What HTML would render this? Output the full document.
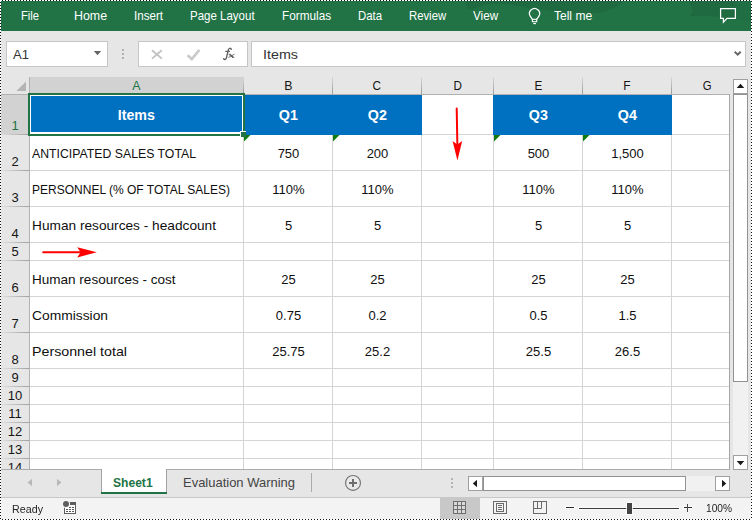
<!DOCTYPE html>
<html><head><meta charset="utf-8"><title>Excel</title>
<style>
html,body{margin:0;padding:0}
body{width:752px;height:520px;position:relative;overflow:hidden;background:#e6e6e6;font-family:"Liberation Sans",sans-serif;}
div,svg{box-sizing:content-box}
</style></head><body>
<div style="position:absolute;left:0px;top:0px;width:752px;height:31px;background:#217346;"></div>
<svg style="position:absolute;left:0;top:0" width="752" height="31" viewBox="0 0 752 31">
<path d="M465,0 L468,10 C474,9 481,6 487,4.5 C494,3.5 502,3.8 508,4.5 C516,5.5 522,6.5 526,7.2 C540,9 560,12.5 585,13.7 C600,14 615,10 626,0 Z" fill="#1f6a41"/>
<path d="M689,0 L691,7 L693,11.5 L689,16.5 C700,15 712,15.5 722,18 L735,19.7 L735,0 Z" fill="#1f6a41"/>
<path d="M735,0 V19.7 L752,21 V0 Z" fill="#206f44"/>
</svg>
<div style="position:absolute;left:20.7px;top:8px;font-size:13px;line-height:16px;color:#ffffff;white-space:nowrap;"><span style="display:inline-block;transform:scaleX(0.8638);transform-origin:0 0">File</span></div>
<div style="position:absolute;left:73.7px;top:8px;font-size:13px;line-height:16px;color:#ffffff;white-space:nowrap;"><span style="display:inline-block;transform:scaleX(0.9542);transform-origin:0 0">Home</span></div>
<div style="position:absolute;left:133.7px;top:8px;font-size:13px;line-height:16px;color:#ffffff;white-space:nowrap;"><span style="display:inline-block;transform:scaleX(0.8950);transform-origin:0 0">Insert</span></div>
<div style="position:absolute;left:189.7px;top:8px;font-size:13px;line-height:16px;color:#ffffff;white-space:nowrap;"><span style="display:inline-block;transform:scaleX(0.8847);transform-origin:0 0">Page Layout</span></div>
<div style="position:absolute;left:281.7px;top:8px;font-size:13px;line-height:16px;color:#ffffff;white-space:nowrap;"><span style="display:inline-block;transform:scaleX(0.9061);transform-origin:0 0">Formulas</span></div>
<div style="position:absolute;left:357.7px;top:8px;font-size:13px;line-height:16px;color:#ffffff;white-space:nowrap;"><span style="display:inline-block;transform:scaleX(0.8774);transform-origin:0 0">Data</span></div>
<div style="position:absolute;left:408.7px;top:8px;font-size:13px;line-height:16px;color:#ffffff;white-space:nowrap;"><span style="display:inline-block;transform:scaleX(0.8704);transform-origin:0 0">Review</span></div>
<div style="position:absolute;left:472.7px;top:8px;font-size:13px;line-height:16px;color:#ffffff;white-space:nowrap;"><span style="display:inline-block;transform:scaleX(0.8979);transform-origin:0 0">View</span></div>
<div style="position:absolute;left:553.7px;top:8px;font-size:13px;line-height:16px;color:#ffffff;white-space:nowrap;"><span style="display:inline-block;transform:scaleX(0.9250);transform-origin:0 0">Tell me</span></div>
<svg style="position:absolute;left:0;top:0" width="752" height="31" viewBox="0 0 752 31" fill="none" stroke="#fff" stroke-width="1.2">
<path d="M532.4,19.3 L530.2,16.2 A5.05,5.05 0 1 1 538.9,16.2 L536.7,19.3"/>
<rect x="532.4" y="19.3" width="4.3" height="2.4" stroke-width="1.1"/>
<path d="M533.2,23.6 H536" stroke-width="1.1"/>
<path d="M720.6,8.5 H735.4 V18.4 H727 L723.4,22.2 V18.4 H720.6 Z" stroke-width="1.25"/>
</svg>
<div style="position:absolute;left:6px;top:41px;width:100px;height:24px;background:#fff;border:1px solid #c6c6c6;"></div>
<div style="position:absolute;left:138px;top:41px;width:108px;height:24px;background:#fff;border:1px solid #c6c6c6;"></div>
<div style="position:absolute;left:251px;top:41px;width:493px;height:24px;background:#fff;border:1px solid #c6c6c6;"></div>
<div style="position:absolute;left:13px;top:47px;font-size:13px;line-height:16px;color:#333;white-space:nowrap;"><span style="display:inline-block;transform:scaleX(1.0059);transform-origin:0 0">A1</span></div>
<div style="position:absolute;left:263.2px;top:47px;font-size:13px;line-height:16px;color:#333;white-space:nowrap;"><span style="display:inline-block;transform:scaleX(1.1007);transform-origin:0 0">Items</span></div>
<svg style="position:absolute;left:93px;top:50px" width="9" height="6"><path d="M0.8,1 H8.2 L4.5,5.2 Z" fill="#646464"/></svg>
<div style="position:absolute;left:122px;top:49px;width:2px;height:2px;background:#b0b0b0;"></div>
<div style="position:absolute;left:122px;top:53px;width:2px;height:2px;background:#b0b0b0;"></div>
<div style="position:absolute;left:122px;top:57px;width:2px;height:2px;background:#b0b0b0;"></div>
<svg style="position:absolute;left:0;top:31px" width="752" height="46" viewBox="0 31 752 46" fill="none">
<path d="M152,50.2 L161.8,58.6 M161.8,50.2 L152,58.6" stroke="#c2c2c2" stroke-width="1.9"/>
<path d="M187.6,55.2 L191.8,59 L199.4,49.8" stroke="#cacaca" stroke-width="2.6"/>
<path d="M231.3,49.3 C230.9,47.9 228.7,47.8 228.3,50 L226.5,57.6 C226.1,59.6 224.6,60 223.6,58.8" stroke="#606060" stroke-width="1.35" stroke-linecap="round"/>
<path d="M225.3,51.4 H229.9" stroke="#606060" stroke-width="1.2"/>
<path d="M229.6,54.3 L233.2,57.4" stroke="#606060" stroke-width="1.7"/>
<path d="M228.4,57.5 L234.4,54.2" stroke="#606060" stroke-width="0.9"/>
<path d="M228.6,54.3 H230.6 M232.4,57.4 H234.4" stroke="#606060" stroke-width="0.8"/>
</svg>
<svg style="position:absolute;left:733px;top:49px" width="11" height="8" fill="none" stroke="#666" stroke-width="2"><path d="M1.7,2.7 L4.7,5.7 L7.7,2.7"/></svg>
<div style="position:absolute;left:30px;top:95px;width:699px;height:374px;background:#fff;"></div>
<div style="position:absolute;left:30px;top:134px;width:699px;height:1px;background:#d4d4d4;"></div>
<div style="position:absolute;left:30px;top:170px;width:699px;height:1px;background:#d4d4d4;"></div>
<div style="position:absolute;left:30px;top:206px;width:699px;height:1px;background:#d4d4d4;"></div>
<div style="position:absolute;left:30px;top:242px;width:699px;height:1px;background:#d4d4d4;"></div>
<div style="position:absolute;left:30px;top:260px;width:699px;height:1px;background:#d4d4d4;"></div>
<div style="position:absolute;left:30px;top:296px;width:699px;height:1px;background:#d4d4d4;"></div>
<div style="position:absolute;left:30px;top:332px;width:699px;height:1px;background:#d4d4d4;"></div>
<div style="position:absolute;left:30px;top:368px;width:699px;height:1px;background:#d4d4d4;"></div>
<div style="position:absolute;left:30px;top:386px;width:699px;height:1px;background:#d4d4d4;"></div>
<div style="position:absolute;left:30px;top:404px;width:699px;height:1px;background:#d4d4d4;"></div>
<div style="position:absolute;left:30px;top:422px;width:699px;height:1px;background:#d4d4d4;"></div>
<div style="position:absolute;left:30px;top:440px;width:699px;height:1px;background:#d4d4d4;"></div>
<div style="position:absolute;left:30px;top:458px;width:699px;height:1px;background:#d4d4d4;"></div>
<div style="position:absolute;left:243px;top:95px;width:1px;height:374px;background:#d4d4d4;"></div>
<div style="position:absolute;left:332px;top:95px;width:1px;height:374px;background:#d4d4d4;"></div>
<div style="position:absolute;left:421px;top:95px;width:1px;height:374px;background:#d4d4d4;"></div>
<div style="position:absolute;left:493px;top:95px;width:1px;height:374px;background:#d4d4d4;"></div>
<div style="position:absolute;left:582px;top:95px;width:1px;height:374px;background:#d4d4d4;"></div>
<div style="position:absolute;left:671px;top:95px;width:1px;height:374px;background:#d4d4d4;"></div>
<div style="position:absolute;left:30px;top:77px;width:214px;height:16px;background:#d2d2d2;"></div>
<div style="position:absolute;left:0px;top:94px;width:729px;height:1px;background:#b1b1b1;"></div>
<div style="position:absolute;left:243px;top:77px;width:1px;height:17px;background:linear-gradient(180deg,#d8d8d8,#9a9a9a);"></div>
<div style="position:absolute;left:332px;top:77px;width:1px;height:17px;background:linear-gradient(180deg,#d8d8d8,#9a9a9a);"></div>
<div style="position:absolute;left:421px;top:77px;width:1px;height:17px;background:linear-gradient(180deg,#d8d8d8,#9a9a9a);"></div>
<div style="position:absolute;left:493px;top:77px;width:1px;height:17px;background:linear-gradient(180deg,#d8d8d8,#9a9a9a);"></div>
<div style="position:absolute;left:582px;top:77px;width:1px;height:17px;background:linear-gradient(180deg,#d8d8d8,#9a9a9a);"></div>
<div style="position:absolute;left:671px;top:77px;width:1px;height:17px;background:linear-gradient(180deg,#d8d8d8,#9a9a9a);"></div>
<div style="position:absolute;left:729px;top:94px;width:1px;height:376px;background:#a6a6a6;"></div>
<div style="position:absolute;left:29px;top:77px;width:1px;height:392px;background:#b1b1b1;"></div>
<div style="position:absolute;left:1px;top:95px;width:28px;height:40px;background:#d2d2d2;"></div>
<div style="position:absolute;left:1px;top:134px;width:28px;height:1px;background:linear-gradient(90deg,#e0e0e0,#a0a0a0);"></div>
<div style="position:absolute;left:1px;top:170px;width:28px;height:1px;background:linear-gradient(90deg,#e0e0e0,#a0a0a0);"></div>
<div style="position:absolute;left:1px;top:206px;width:28px;height:1px;background:linear-gradient(90deg,#e0e0e0,#a0a0a0);"></div>
<div style="position:absolute;left:1px;top:242px;width:28px;height:1px;background:linear-gradient(90deg,#e0e0e0,#a0a0a0);"></div>
<div style="position:absolute;left:1px;top:260px;width:28px;height:1px;background:linear-gradient(90deg,#e0e0e0,#a0a0a0);"></div>
<div style="position:absolute;left:1px;top:296px;width:28px;height:1px;background:linear-gradient(90deg,#e0e0e0,#a0a0a0);"></div>
<div style="position:absolute;left:1px;top:332px;width:28px;height:1px;background:linear-gradient(90deg,#e0e0e0,#a0a0a0);"></div>
<div style="position:absolute;left:1px;top:368px;width:28px;height:1px;background:linear-gradient(90deg,#e0e0e0,#a0a0a0);"></div>
<div style="position:absolute;left:1px;top:386px;width:28px;height:1px;background:linear-gradient(90deg,#e0e0e0,#a0a0a0);"></div>
<div style="position:absolute;left:1px;top:404px;width:28px;height:1px;background:linear-gradient(90deg,#e0e0e0,#a0a0a0);"></div>
<div style="position:absolute;left:1px;top:422px;width:28px;height:1px;background:linear-gradient(90deg,#e0e0e0,#a0a0a0);"></div>
<div style="position:absolute;left:1px;top:440px;width:28px;height:1px;background:linear-gradient(90deg,#e0e0e0,#a0a0a0);"></div>
<div style="position:absolute;left:1px;top:458px;width:28px;height:1px;background:linear-gradient(90deg,#e0e0e0,#a0a0a0);"></div>
<svg style="position:absolute;left:15px;top:79px" width="12" height="13"><path d="M11,2.4 V12 H1.4 Z" fill="#b4b4b4"/></svg>
<div style="position:absolute;left:-63.5px;width:400px;text-align:center;top:78px;font-size:13px;line-height:16px;color:#217346;white-space:nowrap;"><span style="display:inline-block;transform:scaleX(0.9500);transform-origin:50% 0">A</span></div>
<div style="position:absolute;left:88.0px;width:400px;text-align:center;top:78px;font-size:13px;line-height:16px;color:#151515;white-space:nowrap;"><span style="display:inline-block;transform:scaleX(0.9500);transform-origin:50% 0">B</span></div>
<div style="position:absolute;left:177.0px;width:400px;text-align:center;top:78px;font-size:13px;line-height:16px;color:#151515;white-space:nowrap;"><span style="display:inline-block;transform:scaleX(0.9000);transform-origin:50% 0">C</span></div>
<div style="position:absolute;left:257.5px;width:400px;text-align:center;top:78px;font-size:13px;line-height:16px;color:#151515;white-space:nowrap;"><span style="display:inline-block;transform:scaleX(0.9000);transform-origin:50% 0">D</span></div>
<div style="position:absolute;left:338.0px;width:400px;text-align:center;top:78px;font-size:13px;line-height:16px;color:#151515;white-space:nowrap;"><span style="display:inline-block;transform:scaleX(0.9000);transform-origin:50% 0">E</span></div>
<div style="position:absolute;left:427.0px;width:400px;text-align:center;top:78px;font-size:13px;line-height:16px;color:#151515;white-space:nowrap;"><span style="display:inline-block;transform:scaleX(0.9200);transform-origin:50% 0">F</span></div>
<div style="position:absolute;left:507.5px;width:400px;text-align:center;top:78px;font-size:13px;line-height:16px;color:#151515;white-space:nowrap;"><span style="display:inline-block;transform:scaleX(0.8700);transform-origin:50% 0">G</span></div>
<div style="position:absolute;left:-185px;width:400px;text-align:center;top:118.4px;font-size:13px;line-height:16px;color:#217346;white-space:nowrap;"><span style="display:inline-block;transform:scaleX(1.0000);transform-origin:50% 0">1</span></div>
<div style="position:absolute;left:-185px;width:400px;text-align:center;top:154.4px;font-size:13px;line-height:16px;color:#151515;white-space:nowrap;"><span style="display:inline-block;transform:scaleX(1.0000);transform-origin:50% 0">2</span></div>
<div style="position:absolute;left:-185px;width:400px;text-align:center;top:190.4px;font-size:13px;line-height:16px;color:#151515;white-space:nowrap;"><span style="display:inline-block;transform:scaleX(1.0000);transform-origin:50% 0">3</span></div>
<div style="position:absolute;left:-185px;width:400px;text-align:center;top:226.4px;font-size:13px;line-height:16px;color:#151515;white-space:nowrap;"><span style="display:inline-block;transform:scaleX(1.0000);transform-origin:50% 0">4</span></div>
<div style="position:absolute;left:-185px;width:400px;text-align:center;top:244.4px;font-size:13px;line-height:16px;color:#151515;white-space:nowrap;"><span style="display:inline-block;transform:scaleX(1.0000);transform-origin:50% 0">5</span></div>
<div style="position:absolute;left:-185px;width:400px;text-align:center;top:280.4px;font-size:13px;line-height:16px;color:#151515;white-space:nowrap;"><span style="display:inline-block;transform:scaleX(1.0000);transform-origin:50% 0">6</span></div>
<div style="position:absolute;left:-185px;width:400px;text-align:center;top:316.4px;font-size:13px;line-height:16px;color:#151515;white-space:nowrap;"><span style="display:inline-block;transform:scaleX(1.0000);transform-origin:50% 0">7</span></div>
<div style="position:absolute;left:-185px;width:400px;text-align:center;top:352.4px;font-size:13px;line-height:16px;color:#151515;white-space:nowrap;"><span style="display:inline-block;transform:scaleX(1.0000);transform-origin:50% 0">8</span></div>
<div style="position:absolute;left:-185px;width:400px;text-align:center;top:370.4px;font-size:13px;line-height:16px;color:#151515;white-space:nowrap;"><span style="display:inline-block;transform:scaleX(1.0000);transform-origin:50% 0">9</span></div>
<div style="position:absolute;left:-185px;width:400px;text-align:center;top:388.4px;font-size:13px;line-height:16px;color:#151515;white-space:nowrap;"><span style="display:inline-block;transform:scaleX(1.0000);transform-origin:50% 0">10</span></div>
<div style="position:absolute;left:-185px;width:400px;text-align:center;top:406.4px;font-size:13px;line-height:16px;color:#151515;white-space:nowrap;"><span style="display:inline-block;transform:scaleX(1.0000);transform-origin:50% 0">11</span></div>
<div style="position:absolute;left:-185px;width:400px;text-align:center;top:424.4px;font-size:13px;line-height:16px;color:#151515;white-space:nowrap;"><span style="display:inline-block;transform:scaleX(1.0000);transform-origin:50% 0">12</span></div>
<div style="position:absolute;left:-185px;width:400px;text-align:center;top:442.4px;font-size:13px;line-height:16px;color:#151515;white-space:nowrap;"><span style="display:inline-block;transform:scaleX(1.0000);transform-origin:50% 0">13</span></div>
<div style="position:absolute;left:-185px;width:400px;text-align:center;top:460.4px;font-size:13px;line-height:16px;color:#151515;white-space:nowrap;"><span style="display:inline-block;transform:scaleX(1.0000);transform-origin:50% 0">14</span></div>
<div style="position:absolute;left:243px;top:95px;width:179px;height:40px;background:#0070c0;"></div>
<div style="position:absolute;left:493px;top:95px;width:179px;height:40px;background:#0070c0;"></div>
<div style="position:absolute;left:31px;top:96px;width:211px;height:36px;background:#0070c0;"></div>
<svg style="position:absolute;left:244px;top:135px" width="7" height="7"><path d="M0,0 H6.5 L0,6.5 Z" fill="#0f7b0f"/></svg>
<svg style="position:absolute;left:333px;top:135px" width="7" height="7"><path d="M0,0 H6.5 L0,6.5 Z" fill="#0f7b0f"/></svg>
<svg style="position:absolute;left:494px;top:135px" width="7" height="7"><path d="M0,0 H6.5 L0,6.5 Z" fill="#0f7b0f"/></svg>
<svg style="position:absolute;left:583px;top:135px" width="7" height="7"><path d="M0,0 H6.5 L0,6.5 Z" fill="#0f7b0f"/></svg>
<div style="position:absolute;left:28px;top:93px;width:217px;height:2px;background:#217346;"></div>
<div style="position:absolute;left:28px;top:134px;width:212px;height:2px;background:#217346;"></div>
<div style="position:absolute;left:28px;top:93px;width:2px;height:43px;background:#217346;"></div>
<div style="position:absolute;left:243px;top:93px;width:2px;height:38px;background:#217346;"></div>
<div style="position:absolute;left:30px;top:95px;width:213px;height:1px;background:#fff;"></div>
<div style="position:absolute;left:30px;top:95px;width:1px;height:39px;background:#fff;"></div>
<div style="position:absolute;left:242px;top:95px;width:1px;height:37px;background:#fff;"></div>
<div style="position:absolute;left:30px;top:132px;width:211px;height:2px;background:#fff;"></div>
<div style="position:absolute;left:240px;top:131px;width:6px;height:6px;background:#fff;"></div>
<div style="position:absolute;left:241px;top:132px;width:5px;height:5px;background:#217346;"></div>
<div style="position:absolute;left:-63.5px;width:400px;text-align:center;top:107.1px;font-size:14px;line-height:17px;color:#fff;white-space:nowrap;font-weight:bold;"><span style="display:inline-block;transform:scaleX(1.0170);transform-origin:50% 0">Items</span></div>
<div style="position:absolute;left:88.0px;width:400px;text-align:center;top:107.1px;font-size:14px;line-height:17px;color:#fff;white-space:nowrap;font-weight:bold;"><span style="display:inline-block;transform:scaleX(1.0221);transform-origin:50% 0">Q1</span></div>
<div style="position:absolute;left:177.0px;width:400px;text-align:center;top:107.1px;font-size:14px;line-height:17px;color:#fff;white-space:nowrap;font-weight:bold;"><span style="display:inline-block;transform:scaleX(1.0221);transform-origin:50% 0">Q2</span></div>
<div style="position:absolute;left:338.0px;width:400px;text-align:center;top:107.1px;font-size:14px;line-height:17px;color:#fff;white-space:nowrap;font-weight:bold;"><span style="display:inline-block;transform:scaleX(1.0221);transform-origin:50% 0">Q3</span></div>
<div style="position:absolute;left:427.0px;width:400px;text-align:center;top:107.1px;font-size:14px;line-height:17px;color:#fff;white-space:nowrap;font-weight:bold;"><span style="display:inline-block;transform:scaleX(1.0221);transform-origin:50% 0">Q4</span></div>
<div style="position:absolute;left:31.5px;top:146px;font-size:13px;line-height:16px;color:#0f0f0f;white-space:nowrap;"><span style="display:inline-block;transform:scaleX(0.9446);transform-origin:0 0">ANTICIPATED SALES TOTAL</span></div>
<div style="position:absolute;left:31.5px;top:182px;font-size:13px;line-height:16px;color:#0f0f0f;white-space:nowrap;"><span style="display:inline-block;transform:scaleX(0.9238);transform-origin:0 0">PERSONNEL (% OF TOTAL SALES)</span></div>
<div style="position:absolute;left:31.5px;top:218px;font-size:13px;line-height:16px;color:#0f0f0f;white-space:nowrap;"><span style="display:inline-block;transform:scaleX(1.0522);transform-origin:0 0">Human resources - headcount</span></div>
<div style="position:absolute;left:31.5px;top:272px;font-size:13px;line-height:16px;color:#0f0f0f;white-space:nowrap;"><span style="display:inline-block;transform:scaleX(1.0406);transform-origin:0 0">Human resources - cost</span></div>
<div style="position:absolute;left:31.5px;top:308px;font-size:13px;line-height:16px;color:#0f0f0f;white-space:nowrap;"><span style="display:inline-block;transform:scaleX(1.0627);transform-origin:0 0">Commission</span></div>
<div style="position:absolute;left:31.5px;top:344px;font-size:13px;line-height:16px;color:#0f0f0f;white-space:nowrap;"><span style="display:inline-block;transform:scaleX(1.0953);transform-origin:0 0">Personnel total</span></div>
<div style="position:absolute;left:88.5px;width:400px;text-align:center;top:146px;font-size:13px;line-height:16px;color:#0f0f0f;white-space:nowrap;"><span style="display:inline-block;transform:scaleX(1.0000);transform-origin:50% 0">750</span></div>
<div style="position:absolute;left:177.5px;width:400px;text-align:center;top:146px;font-size:13px;line-height:16px;color:#0f0f0f;white-space:nowrap;"><span style="display:inline-block;transform:scaleX(1.0000);transform-origin:50% 0">200</span></div>
<div style="position:absolute;left:338.5px;width:400px;text-align:center;top:146px;font-size:13px;line-height:16px;color:#0f0f0f;white-space:nowrap;"><span style="display:inline-block;transform:scaleX(1.0000);transform-origin:50% 0">500</span></div>
<div style="position:absolute;left:427.5px;width:400px;text-align:center;top:146px;font-size:13px;line-height:16px;color:#0f0f0f;white-space:nowrap;"><span style="display:inline-block;transform:scaleX(1.0000);transform-origin:50% 0">1,500</span></div>
<div style="position:absolute;left:88.5px;width:400px;text-align:center;top:182px;font-size:13px;line-height:16px;color:#0f0f0f;white-space:nowrap;"><span style="display:inline-block;transform:scaleX(1.0000);transform-origin:50% 0">110%</span></div>
<div style="position:absolute;left:177.5px;width:400px;text-align:center;top:182px;font-size:13px;line-height:16px;color:#0f0f0f;white-space:nowrap;"><span style="display:inline-block;transform:scaleX(1.0000);transform-origin:50% 0">110%</span></div>
<div style="position:absolute;left:338.5px;width:400px;text-align:center;top:182px;font-size:13px;line-height:16px;color:#0f0f0f;white-space:nowrap;"><span style="display:inline-block;transform:scaleX(1.0000);transform-origin:50% 0">110%</span></div>
<div style="position:absolute;left:427.5px;width:400px;text-align:center;top:182px;font-size:13px;line-height:16px;color:#0f0f0f;white-space:nowrap;"><span style="display:inline-block;transform:scaleX(1.0000);transform-origin:50% 0">110%</span></div>
<div style="position:absolute;left:88.5px;width:400px;text-align:center;top:218px;font-size:13px;line-height:16px;color:#0f0f0f;white-space:nowrap;"><span style="display:inline-block;transform:scaleX(1.0000);transform-origin:50% 0">5</span></div>
<div style="position:absolute;left:177.5px;width:400px;text-align:center;top:218px;font-size:13px;line-height:16px;color:#0f0f0f;white-space:nowrap;"><span style="display:inline-block;transform:scaleX(1.0000);transform-origin:50% 0">5</span></div>
<div style="position:absolute;left:338.5px;width:400px;text-align:center;top:218px;font-size:13px;line-height:16px;color:#0f0f0f;white-space:nowrap;"><span style="display:inline-block;transform:scaleX(1.0000);transform-origin:50% 0">5</span></div>
<div style="position:absolute;left:427.5px;width:400px;text-align:center;top:218px;font-size:13px;line-height:16px;color:#0f0f0f;white-space:nowrap;"><span style="display:inline-block;transform:scaleX(1.0000);transform-origin:50% 0">5</span></div>
<div style="position:absolute;left:88.5px;width:400px;text-align:center;top:272px;font-size:13px;line-height:16px;color:#0f0f0f;white-space:nowrap;"><span style="display:inline-block;transform:scaleX(1.0000);transform-origin:50% 0">25</span></div>
<div style="position:absolute;left:177.5px;width:400px;text-align:center;top:272px;font-size:13px;line-height:16px;color:#0f0f0f;white-space:nowrap;"><span style="display:inline-block;transform:scaleX(1.0000);transform-origin:50% 0">25</span></div>
<div style="position:absolute;left:338.5px;width:400px;text-align:center;top:272px;font-size:13px;line-height:16px;color:#0f0f0f;white-space:nowrap;"><span style="display:inline-block;transform:scaleX(1.0000);transform-origin:50% 0">25</span></div>
<div style="position:absolute;left:427.5px;width:400px;text-align:center;top:272px;font-size:13px;line-height:16px;color:#0f0f0f;white-space:nowrap;"><span style="display:inline-block;transform:scaleX(1.0000);transform-origin:50% 0">25</span></div>
<div style="position:absolute;left:88.5px;width:400px;text-align:center;top:308px;font-size:13px;line-height:16px;color:#0f0f0f;white-space:nowrap;"><span style="display:inline-block;transform:scaleX(1.0000);transform-origin:50% 0">0.75</span></div>
<div style="position:absolute;left:177.5px;width:400px;text-align:center;top:308px;font-size:13px;line-height:16px;color:#0f0f0f;white-space:nowrap;"><span style="display:inline-block;transform:scaleX(1.0000);transform-origin:50% 0">0.2</span></div>
<div style="position:absolute;left:338.5px;width:400px;text-align:center;top:308px;font-size:13px;line-height:16px;color:#0f0f0f;white-space:nowrap;"><span style="display:inline-block;transform:scaleX(1.0000);transform-origin:50% 0">0.5</span></div>
<div style="position:absolute;left:427.5px;width:400px;text-align:center;top:308px;font-size:13px;line-height:16px;color:#0f0f0f;white-space:nowrap;"><span style="display:inline-block;transform:scaleX(1.0000);transform-origin:50% 0">1.5</span></div>
<div style="position:absolute;left:88.5px;width:400px;text-align:center;top:344px;font-size:13px;line-height:16px;color:#0f0f0f;white-space:nowrap;"><span style="display:inline-block;transform:scaleX(1.0000);transform-origin:50% 0">25.75</span></div>
<div style="position:absolute;left:177.5px;width:400px;text-align:center;top:344px;font-size:13px;line-height:16px;color:#0f0f0f;white-space:nowrap;"><span style="display:inline-block;transform:scaleX(1.0000);transform-origin:50% 0">25.2</span></div>
<div style="position:absolute;left:338.5px;width:400px;text-align:center;top:344px;font-size:13px;line-height:16px;color:#0f0f0f;white-space:nowrap;"><span style="display:inline-block;transform:scaleX(1.0000);transform-origin:50% 0">25.5</span></div>
<div style="position:absolute;left:427.5px;width:400px;text-align:center;top:344px;font-size:13px;line-height:16px;color:#0f0f0f;white-space:nowrap;"><span style="display:inline-block;transform:scaleX(1.0000);transform-origin:50% 0">26.5</span></div>
<svg style="position:absolute;left:0;top:0" width="752" height="520" viewBox="0 0 752 520">
<path d="M43.2,252.3 H82" stroke="#ff0000" stroke-width="2" stroke-linecap="round" fill="none"/>
<path d="M96.8,252.3 L77.2,247.2 L80.6,252.3 L77.2,257.4 Z" fill="#ff0000"/>
<path d="M456.7,108.6 L457.4,146" stroke="#ff0000" stroke-width="2" stroke-linecap="round" fill="none"/>
<path d="M457.4,160.6 L452.6,141 L457.3,144.6 L462.2,141 Z" fill="#ff0000"/>
</svg>
<div style="position:absolute;left:733px;top:94px;width:15px;height:376px;background:#f1f1f1;"></div>
<div style="position:absolute;left:733px;top:79px;width:13px;height:13px;background:#fff;border:1px solid #a0a0a0;"></div>
<div style="position:absolute;left:733px;top:94px;width:13px;height:286px;background:#fff;border:1px solid #929292;"></div>
<div style="position:absolute;left:733px;top:455px;width:13px;height:13px;background:#fff;border:1px solid #a0a0a0;"></div>
<svg style="position:absolute;left:736px;top:83px" width="9" height="6"><path d="M0.7,5 L4.5,0.8 L8.3,5 Z" fill="#1a1a1a"/></svg>
<svg style="position:absolute;left:736px;top:460px" width="9" height="6"><path d="M0.7,1 L4.5,5.2 L8.3,1 Z" fill="#1a1a1a"/></svg>
<div style="position:absolute;left:0px;top:470px;width:752px;height:27px;background:#e6e6e6;"></div>
<div style="position:absolute;left:0px;top:469px;width:729px;height:1px;background:#ababab;"></div>
<div style="position:absolute;left:101px;top:469px;width:66px;height:23px;background:#fff;"></div>
<div style="position:absolute;left:101px;top:469px;width:1px;height:23px;background:#a2a2a2;"></div>
<div style="position:absolute;left:166px;top:469px;width:1px;height:23px;background:#a2a2a2;"></div>
<div style="position:absolute;left:101px;top:492px;width:66px;height:2px;background:#217346;"></div>
<div style="position:absolute;left:113px;top:474.5px;font-size:13px;line-height:16px;color:#217346;white-space:nowrap;font-weight:bold;"><span style="display:inline-block;transform:scaleX(0.9287);transform-origin:0 0">Sheet1</span></div>
<div style="position:absolute;left:183.3px;top:474.5px;font-size:13px;line-height:16px;color:#444;white-space:nowrap;"><span style="display:inline-block;transform:scaleX(0.9978);transform-origin:0 0">Evaluation Warning</span></div>
<div style="position:absolute;left:311px;top:473px;width:1px;height:19px;background:#ababab;"></div>
<svg style="position:absolute;left:344px;top:474px" width="18" height="18" fill="none" stroke="#747474" stroke-width="1.15"><circle cx="9" cy="8.9" r="7.45" fill="#e9e9e9"/><path d="M9,4.9 V12.9 M5,8.9 H13" stroke="#6e6e6e" stroke-width="2"/></svg>
<svg style="position:absolute;left:27px;top:479px" width="6" height="8"><path d="M5,-0.2 V7.3 L0.6,3.55 Z" fill="#b8b8b8"/></svg>
<svg style="position:absolute;left:56px;top:479px" width="6" height="8"><path d="M1,-0.2 V7.3 L5.4,3.55 Z" fill="#b8b8b8"/></svg>
<div style="position:absolute;left:451px;top:478px;width:2px;height:2px;background:#b4b4b4;"></div>
<div style="position:absolute;left:451px;top:482px;width:2px;height:2px;background:#b4b4b4;"></div>
<div style="position:absolute;left:451px;top:486px;width:2px;height:2px;background:#b4b4b4;"></div>
<div style="position:absolute;left:468px;top:476px;width:262px;height:15px;background:#f1f1f1;"></div>
<div style="position:absolute;left:468px;top:476px;width:13px;height:13px;background:#fff;border:1px solid #a0a0a0;"></div>
<div style="position:absolute;left:483px;top:476px;width:201px;height:13px;background:#fff;border:1px solid #929292;"></div>
<div style="position:absolute;left:715px;top:476px;width:13px;height:13px;background:#fff;border:1px solid #a0a0a0;"></div>
<svg style="position:absolute;left:472px;top:479px" width="6" height="9"><path d="M5,0.7 V8.3 L0.8,4.5 Z" fill="#1a1a1a"/></svg>
<svg style="position:absolute;left:721px;top:479px" width="6" height="9"><path d="M1,0.7 V8.3 L5.2,4.5 Z" fill="#1a1a1a"/></svg>
<div style="position:absolute;left:0px;top:497px;width:752px;height:1px;background:#c8c8c8;"></div>
<div style="position:absolute;left:0px;top:498px;width:752px;height:22px;background:#f3f3f3;"></div>
<div style="position:absolute;left:11.5px;top:502px;font-size:11.5px;line-height:14.5px;color:#262626;white-space:nowrap;will-change:transform;"><span style="display:inline-block;transform:scaleX(0.9323);transform-origin:0 0">Ready</span></div>
<svg style="position:absolute;left:56px;top:498px" width="30" height="20" viewBox="56 498 30 20">
<rect x="64.5" y="502.5" width="11" height="11" fill="#fff" stroke="#5e5e5e" stroke-width="1"/>
<rect x="70" y="502" width="6" height="3" fill="#5e5e5e"/>
<rect x="69" y="507" width="2" height="1" fill="#5a5a5a"/><rect x="72" y="507" width="2" height="1" fill="#5a5a5a"/><rect x="66" y="509" width="2" height="1" fill="#5a5a5a"/><rect x="69" y="509" width="2" height="1" fill="#5a5a5a"/><rect x="72" y="509" width="2" height="1" fill="#5a5a5a"/><rect x="66" y="511" width="2" height="1" fill="#5a5a5a"/><rect x="69" y="511" width="2" height="1" fill="#5a5a5a"/><rect x="72" y="511" width="2" height="1" fill="#5a5a5a"/>
<circle cx="66" cy="503.9" r="4" fill="#f8f8f8"/>
<circle cx="66" cy="503.9" r="3" fill="#5e5e5e"/>
</svg>
<div style="position:absolute;left:440px;top:498px;width:40px;height:22px;background:#c8c8c8;"></div>
<svg style="position:absolute;left:453px;top:501px" width="13" height="13"><rect width="13" height="13" fill="#6e6e6e"/><rect x="1" y="1" width="3" height="3" fill="#d9d9d9"/><rect x="1" y="5" width="3" height="3" fill="#d9d9d9"/><rect x="1" y="9" width="3" height="3" fill="#d9d9d9"/><rect x="5" y="1" width="3" height="3" fill="#d9d9d9"/><rect x="5" y="5" width="3" height="3" fill="#d9d9d9"/><rect x="5" y="9" width="3" height="3" fill="#d9d9d9"/><rect x="9" y="1" width="3" height="3" fill="#d9d9d9"/><rect x="9" y="5" width="3" height="3" fill="#d9d9d9"/><rect x="9" y="9" width="3" height="3" fill="#d9d9d9"/></svg>
<svg style="position:absolute;left:493px;top:501px" width="14" height="13" fill="none" stroke="#6a6a6a"><rect x="0.5" y="0.5" width="13" height="12"/><rect x="3.5" y="2.5" width="7" height="8"/><path d="M5,4.5 H9 M5,6.5 H9 M5,8.5 H9" stroke-width="1"/></svg>
<svg style="position:absolute;left:533px;top:501px" width="14" height="13" fill="none" stroke="#6a6a6a"><rect x="0.5" y="0.5" width="13" height="12"/><path d="M0.5,7.5 H8.5 V0.5 M4.5,0.5 V7.5"/></svg>
<div style="position:absolute;left:566px;top:507px;width:8px;height:1px;background:#2a2a2a;box-shadow:0 0 0 1px rgba(255,255,255,.75);"></div>
<div style="position:absolute;left:579px;top:508px;width:100px;height:1px;background:#3a3a3a;box-shadow:0 0 0 1px rgba(255,255,255,.6);"></div>
<div style="position:absolute;left:627px;top:503px;width:5px;height:11px;background:#444;box-shadow:0 0 0 1px rgba(255,255,255,.75);"></div>
<div style="position:absolute;left:684px;top:507px;width:8px;height:1px;background:#2a2a2a;box-shadow:0 0 0 1px rgba(255,255,255,.75);"></div>
<div style="position:absolute;left:687px;top:504px;width:1px;height:8px;background:#4a4a4a;"></div>
<div style="position:absolute;left:705.7px;top:501.2px;font-size:11.5px;line-height:14.5px;color:#262626;white-space:nowrap;will-change:transform;"><span style="display:inline-block;transform:scaleX(0.8837);transform-origin:0 0">100%</span></div>
<div style="position:absolute;left:0px;top:0px;width:752px;height:1px;background:repeating-linear-gradient(90deg,#fff 0 2px,#111 2px 3px);"></div>
<div style="position:absolute;left:0px;top:0px;width:1px;height:520px;background:repeating-linear-gradient(180deg,#fff 0 2px,#111 2px 3px);"></div>
<div style="position:absolute;left:0px;top:519px;width:752px;height:1px;background:repeating-linear-gradient(90deg,#fff 0 2px,#111 2px 3px);"></div>
<div style="position:absolute;left:751px;top:0px;width:1px;height:520px;background:repeating-linear-gradient(180deg,#fff 0 1px,#111 1px 2px,#fff 2px 3px);"></div>
</body></html>
